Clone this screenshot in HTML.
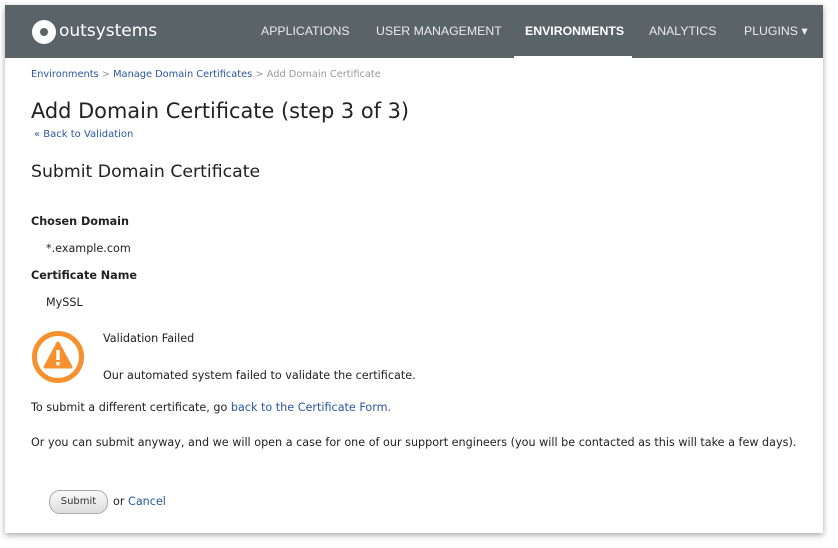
<!DOCTYPE html>
<html><head><style>
body{margin:0;background:#fff;width:838px;height:548px;position:relative;overflow:hidden;font-family:"DejaVu Sans","Liberation Sans",sans-serif;color:#222}
.win{position:absolute;left:5px;top:5px;width:818px;height:528px;background:#fff;box-shadow:0 2px 6px rgba(0,0,0,.35)}
.hdr{position:absolute;left:0;top:0;width:818px;height:53px;background:#5a6367}
.logo{position:absolute;left:27px;top:15px;width:24px;height:24px;border-radius:50%;background:#fff}
.logo:after{content:"";position:absolute;left:8px;top:8px;width:8px;height:8px;border-radius:50%;background:#5a6367}
.lt{position:absolute;left:54px;top:16px;color:#fff;font-size:17px;font-family:"DejaVu Sans",sans-serif}
.nav{position:absolute;top:19px;color:#e8ecee;font-size:12.3px;font-family:"Liberation Sans",sans-serif}
.act{position:absolute;left:509px;top:51px;width:118px;height:2px;background:#fff}
.t{position:absolute;white-space:nowrap;font-size:11.2px}
a{color:#2a58a0;text-decoration:none}
</style></head><body>
<div class="win">
<div class="hdr">
<div class="logo"></div><div class="lt">outsystems</div>
<div class="nav" style="left:256px">APPLICATIONS</div>
<div class="nav" style="left:371px">USER MANAGEMENT</div>
<div class="nav" style="left:520px;color:#fff;font-weight:bold">ENVIRONMENTS</div>
<div class="nav" style="left:644px">ANALYTICS</div>
<div class="nav" style="left:739px">PLUGINS ▾</div>
<div class="act"></div>
</div>
</div>
<div class="t" style="left:31px;top:69px;font-size:9.8px;color:#999"><a>Environments</a> &gt; <a>Manage Domain Certificates</a> &gt; Add Domain Certificate</div>
<div class="t" style="left:31px;top:99px;font-size:20.9px;color:#222">Add Domain Certificate (step 3 of 3)</div>
<div class="t" style="left:34px;top:129px;font-size:10px"><a>« Back to Validation</a></div>
<div class="t" style="left:31px;top:162px;font-size:17.3px">Submit Domain Certificate</div>
<div class="t" style="left:31px;top:215px;font-weight:bold">Chosen Domain</div>
<div class="t" style="left:46px;top:242px">*.example.com</div>
<div class="t" style="left:31px;top:269px;font-weight:bold">Certificate Name</div>
<div class="t" style="left:46px;top:296px">MySSL</div>
<svg style="position:absolute;left:31px;top:330px" width="54" height="54" viewBox="0 0 54 54"><circle cx="27" cy="27" r="23.5" fill="none" stroke="#f7902f" stroke-width="5"/><path d="M27 13 L40 37 L14 37 Z" fill="#f7902f" stroke="#f7902f" stroke-width="3" stroke-linejoin="round"/><rect x="25.3" y="20" width="3.4" height="10" fill="#fff"/><rect x="25.3" y="32" width="3.4" height="3.4" fill="#fff"/></svg>
<div class="t" style="left:103px;top:332px">Validation Failed</div>
<div class="t" style="left:103px;top:369px">Our automated system failed to validate the certificate.</div>
<div class="t" style="left:31px;top:401px">To submit a different certificate, go <a>back to the Certificate Form.</a></div>
<div class="t" style="left:31px;top:436px">Or you can submit anyway, and we will open a case for one of our support engineers (you will be contacted as this will take a few days).</div>
<div style="position:absolute;left:49px;top:490px;width:57px;height:22px;border:1px solid #aaa;border-radius:11px;background:linear-gradient(#fafafa,#ddd);font-size:10px;line-height:22px;text-align:center;color:#333">Submit</div>
<div class="t" style="left:113px;top:495px">or <a>Cancel</a></div>
</body></html>
